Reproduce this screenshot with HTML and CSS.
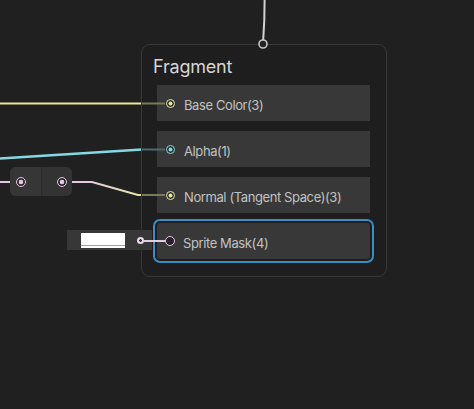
FILE: index.html
```html
<!DOCTYPE html>
<html>
<head>
<meta charset="utf-8">
<link rel="stylesheet" href="styles.css">
</head>
<body>
<div class="canvas">
  <svg class="wires" width="474" height="409" viewBox="0 0 474 409">
    <defs>
      <linearGradient id="pg" gradientUnits="userSpaceOnUse" x1="72" y1="0" x2="141" y2="0">
        <stop offset="0" stop-color="#e4c6e4"/>
        <stop offset="0.35" stop-color="#e6cfd6"/>
        <stop offset="1" stop-color="#e6e6a2"/>
      </linearGradient>
    </defs>
    <path d="M0 103.5 H142" stroke="#e6e6a0" stroke-width="2.2" fill="none"/>
    <path d="M0 158.5 L142 149.5" stroke="#86d8e2" stroke-width="2.4" fill="none"/>
    <path d="M0 182 H12" stroke="#e4c6e4" stroke-width="2" fill="none"/>
    <path d="M70 182 H92 L138 195 H142" stroke="url(#pg)" stroke-width="2" fill="none"/>
  </svg>

  <div class="fragment">
    <div class="title">Fragment</div>
    <div class="rows">
      <div class="row"><span class="port yellow"></span><span class="label">Base Color(3)</span></div>
      <div class="row"><span class="port cyan"></span><span class="label">Alpha(1)</span></div>
      <div class="row"><span class="port yellow"></span><span class="label">Normal (Tangent Space)(3)</span></div>
      <div class="row selected"><span class="port hollow"></span><span class="label">Sprite Mask(4)</span></div>
    </div>
  </div>

  <div class="mini">
    <div class="half left"><span class="port pink big"></span></div>
    <div class="half right"><span class="port pink big"></span></div>
  </div>

  <div class="field">
    <span class="swatch"></span>
    <span class="dot"></span>
  </div>

  <svg class="overlay" width="474" height="409" viewBox="0 0 474 409">
    <path d="M264.6 0 L264.3 20 L263.2 40" stroke="#d2d2d2" stroke-width="2" fill="none"/>
    <circle cx="263" cy="44" r="4" fill="#222222" stroke="#c6c6c6" stroke-width="1.6"/>
    <path d="M142 103.5 H165" stroke="#7a7a5c" stroke-width="2"/>
    <path d="M142 149.5 H165" stroke="#4e6a6e" stroke-width="2"/>
    <path d="M142 195 H165" stroke="#7a7a5c" stroke-width="2"/>
    <path d="M143 241 H165" stroke="#e2cce2" stroke-width="2"/>
  </svg>
</div>
</body>
</html>
```

FILE: styles.css
```css
html, body {
  margin: 0;
  padding: 0;
  background: #202020;
}

body {
  font-family: Inter, "Noto Sans", sans-serif;
}

.canvas {
  position: relative;
  width: 474px;
  height: 409px;
  overflow: hidden;
}

.wires {
  position: absolute;
  left: 0;
  top: 0;
  z-index: 0;
}

.overlay {
  position: absolute;
  left: 0;
  top: 0;
  z-index: 5;
  pointer-events: none;
}

.fragment {
  position: absolute;
  left: 141px;
  top: 44px;
  z-index: 1;
  box-sizing: border-box;
  width: 246px;
  height: 233px;
  border: 1px solid #383838;
  border-radius: 9px;
  background: #1e1e1e;
  padding: 0 16px 0 15px;
  display: flex;
  flex-direction: column;
}

.title {
  margin: 11px 0 7px -4px;
  font-size: 18px;
  line-height: 22px;
  letter-spacing: -0.2px;
  color: #d6d6d6;
}

.rows {
  display: flex;
  flex-direction: column;
  gap: 10px;
}

.row {
  height: 36px;
  background: #383838;
  display: flex;
  align-items: center;
  padding-left: 9px;
  gap: 9px;
  font-size: 13px;
  letter-spacing: -0.4px;
  color: #c2c2c2;
}

.row.selected {
  outline: 2px solid #3a8cc6;
  outline-offset: 2px;
  border-radius: 3px;
  padding-left: 8px;
  gap: 8px;
}

.label {
  padding-top: 4px;
  white-space: nowrap;
}

.port {
  box-sizing: border-box;
  width: 9px;
  height: 9px;
  border-radius: 50%;
  border: 1.5px solid currentColor;
  background: radial-gradient(circle, currentColor 0 1.7px, #2e2e2e 2.3px);
  flex: none;
}

.port.big {
  width: 10px;
  height: 10px;
  background: radial-gradient(circle, currentColor 0 2px, #2e2e2e 2.6px);
}

.port.yellow { color: #e8e8a0; }
.port.cyan { color: #86d8e2; }
.port.pink { color: #e4c6e4; }

.port.hollow {
  width: 10px;
  height: 10px;
  color: #e4cce4;
  background: #2a1f2c;
}

.mini {
  position: absolute;
  left: 10px;
  top: 167px;
  z-index: 2;
  width: 62px;
  height: 29px;
  border-radius: 6px;
  overflow: hidden;
  display: flex;
  background: #343434;
}

.half {
  display: flex;
  align-items: center;
}

.half.left {
  width: 31px;
  padding-left: 6px;
  box-sizing: border-box;
  background: #363636;
}

.half.right {
  flex: 1;
  justify-content: flex-end;
  padding-right: 5px;
  border-left: 1px solid #2a2a2a;
  background: #333333;
}

.field {
  position: absolute;
  left: 67px;
  top: 230px;
  z-index: 3;
  width: 85px;
  height: 20px;
  background: #373737;
  display: flex;
  align-items: center;
}

.swatch {
  margin-left: 14px;
  width: 44px;
  height: 15px;
  background: linear-gradient(to bottom, #ffffff 0 12px, #a0a0a0 12px 13px, #ffffff 13px);
}

.dot {
  box-sizing: border-box;
  margin-left: 11.5px;
  width: 7px;
  height: 7px;
  border-radius: 50%;
  background: radial-gradient(circle, #3a2f3c 0 1px, #ead8ec 1.6px);
}
```
